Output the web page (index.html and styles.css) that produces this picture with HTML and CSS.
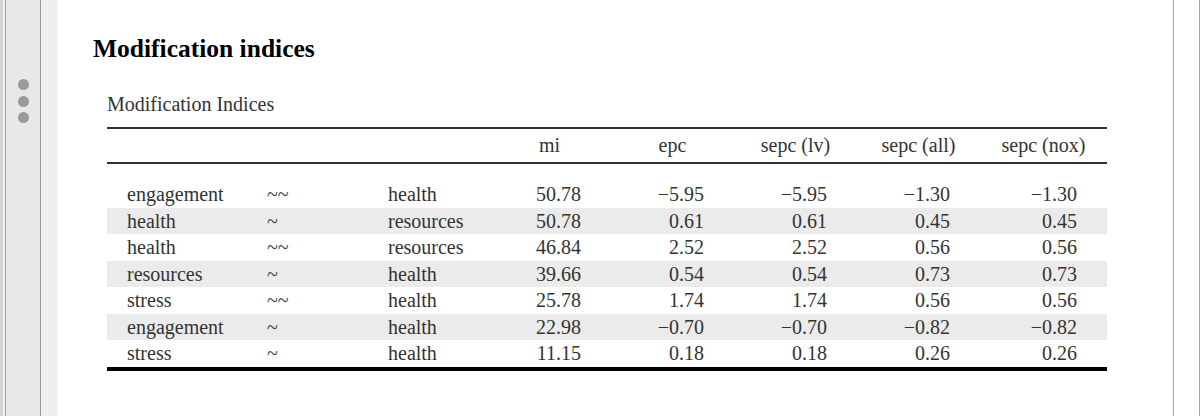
FILE: index.html
```html
<!DOCTYPE html>
<html>
<head>
<meta charset="utf-8">
<link rel="stylesheet" href="styles.css">
</head>
<body>
<div class="app">
  <aside class="sidebar">
    <div class="edge"></div>
    <div class="rail">
      <div class="dots"><span class="dot"></span><span class="dot"></span><span class="dot"></span></div>
    </div>
  </aside>
  <main class="results">
    <h1 class="title">Modification indices</h1>
    <div class="subtitle">Modification Indices</div>
    <table class="mi-table">
      <colgroup>
        <col class="c-lhs"><col class="c-op"><col class="c-rhs">
        <col class="c-num"><col class="c-num"><col class="c-num"><col class="c-num"><col class="c-last">
      </colgroup>
      <thead>
        <tr>
          <th></th><th></th><th></th>
          <th>mi</th><th>epc</th><th>sepc (lv)</th><th>sepc (all)</th><th>sepc (nox)</th>
        </tr>
      </thead>
      <tbody>
        <tr class="spacer"><td colspan="8"></td></tr>
        <tr><td>engagement</td><td class="op">~~</td><td>health</td><td class="n">50.78</td><td class="n">−5.95</td><td class="n">−5.95</td><td class="n">−1.30</td><td class="n">−1.30</td></tr>
        <tr class="alt"><td>health</td><td class="op">~</td><td>resources</td><td class="n">50.78</td><td class="n">0.61</td><td class="n">0.61</td><td class="n">0.45</td><td class="n">0.45</td></tr>
        <tr><td>health</td><td class="op">~~</td><td>resources</td><td class="n">46.84</td><td class="n">2.52</td><td class="n">2.52</td><td class="n">0.56</td><td class="n">0.56</td></tr>
        <tr class="alt"><td>resources</td><td class="op">~</td><td>health</td><td class="n">39.66</td><td class="n">0.54</td><td class="n">0.54</td><td class="n">0.73</td><td class="n">0.73</td></tr>
        <tr><td>stress</td><td class="op">~~</td><td>health</td><td class="n">25.78</td><td class="n">1.74</td><td class="n">1.74</td><td class="n">0.56</td><td class="n">0.56</td></tr>
        <tr class="alt"><td>engagement</td><td class="op">~</td><td>health</td><td class="n">22.98</td><td class="n">−0.70</td><td class="n">−0.70</td><td class="n">−0.82</td><td class="n">−0.82</td></tr>
        <tr class="last"><td>stress</td><td class="op">~</td><td>health</td><td class="n">11.15</td><td class="n">0.18</td><td class="n">0.18</td><td class="n">0.26</td><td class="n">0.26</td></tr>
      </tbody>
    </table>
  </main>
  <aside class="right-strip"></aside>
</div>
</body>
</html>
```

FILE: styles.css
```css
html, body {
  margin: 0;
  padding: 0;
  background: #ffffff;
}

.app {
  display: flex;
  width: 1200px;
  height: 416px;
  overflow: hidden;
  font-family: "Liberation Serif", "Times New Roman", serif;
}

.sidebar {
  width: 58px;
  flex: none;
  display: flex;
  background: #efefef;
}

.edge {
  width: 3px;
  background: #d3d3d3;
  margin-right: 2px;
}

.rail {
  width: 34px;
  border-left: 1px solid #a0a0a0;
  border-right: 1px solid #999999;
  background: #e8e8e8;
}

.dots {
  display: flex;
  flex-direction: column;
  align-items: center;
  gap: 5.5px;
  padding-top: 79px;
  padding-left: 1px;
}

.dot {
  width: 11px;
  height: 11px;
  border-radius: 50%;
  background: #9a9a9a;
}

.results {
  flex: none;
  width: 1116px;
  padding-left: 35px;
  box-sizing: border-box;
  background: #ffffff;
  border-right: 1px solid #a9a9a9;
}

.right-strip {
  flex: 1;
  background: #ffffff;
  border-right: 1px solid #a9a9a9;
}

.title {
  margin: 34px 0 0 0;
  font-size: 25.5px;
  line-height: 30px;
  font-weight: bold;
  color: #000000;
}

.subtitle {
  margin: 28px 0 0 14px;
  font-size: 20px;
  line-height: 24px;
  color: #333333;
}

.mi-table {
  margin: 11px 0 0 14px;
  width: 1000px;
  table-layout: fixed;
  border-collapse: collapse;
  font-size: 20px;
  color: #333333;
  border-top: 2px solid #333333;
  border-bottom: 4px solid #000000;
}

.c-lhs { width: 143px; }
.c-op { width: 120px; }
.c-rhs { width: 118px; }
.c-num { width: 123px; }
.c-last { width: 127px; }

.mi-table thead th {
  font-weight: normal;
  text-align: center;
  padding: 4px 0 5px 0;
  line-height: 24px;
  border-bottom: 2px solid #333333;
}

.mi-table td {
  padding: 0;
  line-height: 26.5px;
  white-space: nowrap;
}

.mi-table td:nth-child(1) { padding-left: 20px; }
.mi-table td:nth-child(2) { padding-left: 17px; }
.mi-table td:nth-child(3) { padding-left: 18px; }

.mi-table td.n {
  text-align: right;
  padding-right: 30px;
}

.mi-table td.op {
  color: #444444;
}

.mi-table tr.spacer td {
  height: 17px;
  line-height: 17px;
  padding: 0;
}

.mi-table tr.alt td {
  background: #ebebeb;
}

.mi-table tr.last td {
  border-bottom: 2px solid #ffffff;
}
```
